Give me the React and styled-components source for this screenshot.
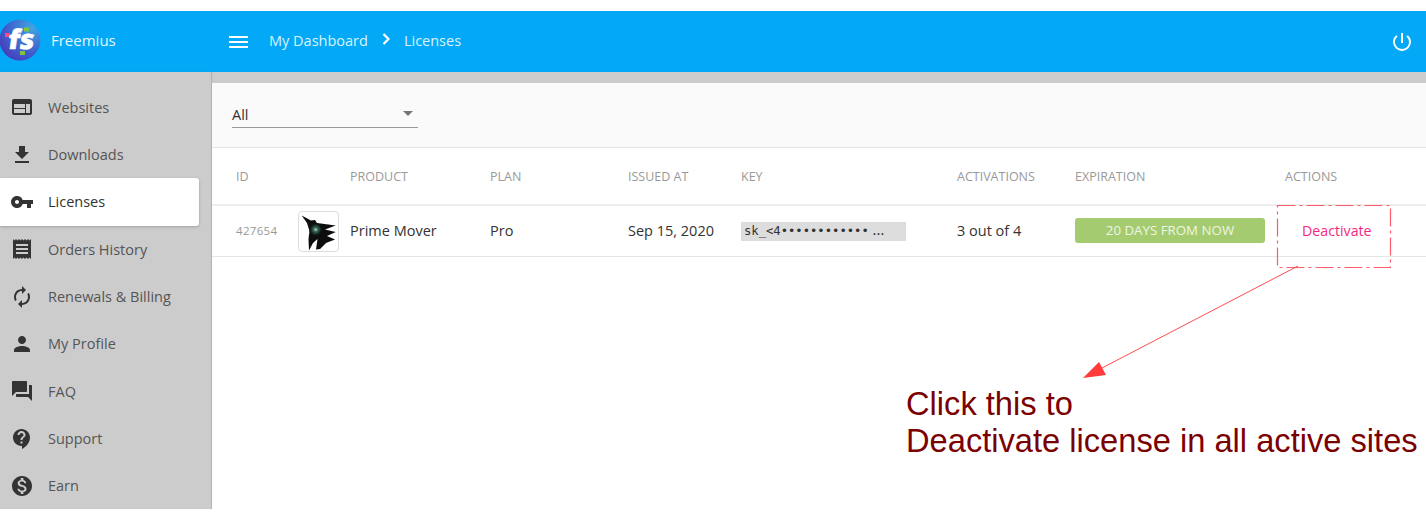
import React from 'react';
import styled, { createGlobalStyle } from 'styled-components';
import {
  MdWeb, MdFileDownload, MdVpnKey, MdReceipt, MdAutorenew, MdPerson,
  MdQuestionAnswer, MdContactSupport, MdMonetizationOn,
  MdPowerSettingsNew, MdArrowDropDown,
} from 'react-icons/md';

const Global = createGlobalStyle`
  html, body { margin: 0; padding: 0; background: #fff; overflow: hidden; }
  body { font-family: "Open Sans", "Liberation Sans", sans-serif; }
  * { box-sizing: border-box; }
`;

const Page = styled.div`
  position: relative;
  width: 1426px;
  height: 513px;
  padding-top: 11px;
  background: #fff;
  overflow: hidden;
`;

const Header = styled.header`
  height: 61px;
  background: #03a9f6;
  color: #e3f6fe;
  display: flex;
  align-items: center;
  font-size: 14.5px;
  padding-right: 12px;
`;

const Brand = styled.div`
  width: 229px;
  display: flex;
  align-items: center;
  gap: 10px;
  flex-shrink: 0;
  padding-bottom: 3px;
`;

const BrandName = styled.span`
  color: #e3f6fe;
  font-size: 15px;
`;

const Crumbs = styled.nav`
  display: flex;
  align-items: center;
  flex: 1;
  color: #d9f2fe;
  padding-bottom: 3px;
`;

const MenuBars = styled.svg`
  width: 19px;
  height: 12px;
  margin: 3px 21px 0 0;
  display: block;
`;

const Chevron = styled.svg`
  width: 9px;
  height: 12px;
  margin: -2px 13px 0 14px;
  display: block;
`;

const Power = styled(MdPowerSettingsNew)`
  width: 24px;
  height: 24px;
  color: #fff;
`;

const Body = styled.div`
  display: flex;
  height: 437px;
  background: #cccccc;
`;

const Sidebar = styled.aside`
  width: 211px;
  flex-shrink: 0;
  padding-top: 11.5px;
  box-shadow: 1px 0 1px rgba(0, 0, 0, 0.12);
`;

const NavItem = styled.div`
  width: 199px;
  height: 47.35px;
  display: flex;
  align-items: center;
  font-size: 14.5px;
  color: ${p => (p.$active ? '#333' : '#555')};
  background: ${p => (p.$active ? '#fff' : 'transparent')};
  border-radius: 0 3px 3px 0;
  box-shadow: ${p => (p.$active ? '0 1px 3px rgba(0,0,0,.22)' : 'none')};
`;

const NavIcon = styled.span`
  width: 48px;
  display: flex;
  justify-content: center;
  padding-right: 4px;
  color: #333;
  flex-shrink: 0;
  svg { width: 24px; height: 24px; display: block; }
`;

const Main = styled.main`
  flex: 1;
  margin: 11px 0 0 1px;
  background: #fff;
  border-radius: 3px 0 0 0;
  min-width: 0;
`;

const FilterBar = styled.div`
  height: 65px;
  padding: 19px 0 0 20px;
  background: #fafafa;
  border-bottom: 1px solid #e4e4e4;
`;

const Select = styled.div`
  width: 186px;
  height: 26px;
  display: flex;
  align-items: center;
  justify-content: space-between;
  font-size: 14.5px;
  color: #333;
  border-bottom: 1px solid #999;
`;

const Caret = styled(MdArrowDropDown)`
  width: 24px;
  height: 24px;
  color: #757575;
  margin: -4px -2px 0 0;
`;

const columns = '62px 52px 140px 138px 113px 216px 118px 210px 1fr';

const Row = styled.div`
  display: grid;
  grid-template-columns: ${columns};
  align-items: center;
  padding-left: 24px;
`;

const HeadRow = styled(Row)`
  height: 58px;
  font-size: 12.5px;
  color: #999;
  border-bottom: 2px solid #eee;
`;

const DataRow = styled(Row)`
  height: 51px;
  font-size: 14.5px;
  color: #333;
  border-bottom: 1px solid #e6e6e6;
`;

const TextCell = styled.span`
  padding-bottom: 2px;
`;

const IdCell = styled(TextCell)`
  font-size: 11.5px;
  color: #999;
  letter-spacing: 0.3px;
`;

const Thumb = styled.div`
  width: 41px;
  height: 41px;
  border: 1px solid #ddd;
  border-radius: 4px;
  background: #fff;
  svg { display: block; width: 39px; height: 39px; }
`;

const KeyBox = styled.div`
  width: 165px;
  height: 19px;
  background: #dddddd;
  padding-left: 3px;
  font-family: "DejaVu Sans Mono", "Liberation Mono", monospace;
  font-size: 12.2px;
  line-height: 19px;
  color: #333;
  white-space: nowrap;
  overflow: hidden;
`;

const KeyDots = styled.span`
  letter-spacing: -3.4px;
  margin-left: 2px;
`;

const Badge = styled.div`
  width: 190px;
  height: 25px;
  margin-top: -2px;
  border-radius: 3px;
  background: #a5cb70;
  color: #eef6e2;
  font-size: 13.3px;
  line-height: 25px;
  text-align: center;
  text-transform: uppercase;
`;

const DeactivateLink = styled.a`
  color: #f0297e;
  font-size: 14.2px;
  padding: 0 0 2px 17px;
`;

const Overlay = styled.svg`
  position: absolute;
  left: 0;
  top: 0;
  width: 1426px;
  height: 513px;
  pointer-events: none;
`;

const Note = styled.div`
  position: absolute;
  left: 906px;
  top: 385px;
  font-family: "Liberation Sans", Arial, sans-serif;
  font-size: 32.65px;
  line-height: 37px;
  color: #7b0000;
  white-space: nowrap;
`;

const BottomStrip = styled.div`
  height: 4px;
  background: #fff;
`;

const Logo = () => (
  <svg width="41" height="42" viewBox="0 0 41 42" aria-label="Freemius logo">
    <defs>
      <radialGradient id="lg" cx="0.8" cy="0.2" r="1">
        <stop offset="0" stopColor="#3fa5e4" />
        <stop offset="0.55" stopColor="#3f66cf" />
        <stop offset="1" stopColor="#4a35b8" />
      </radialGradient>
    </defs>
    <circle cx="20" cy="21" r="20.5" fill="url(#lg)" />
    <rect x="5" y="14" width="5" height="4" fill="#ef4f86" />
    <rect x="24" y="8.5" width="5" height="4" fill="#82c341" />
    <rect x="20" y="32" width="5" height="4" fill="#82c341" />
    <text
      x="11.5"
      y="30"
      transform="skewX(-8)"
      fontFamily="'Open Sans', sans-serif"
      fontWeight="800"
      fontSize="27"
      fill="#fff"
      stroke="#fff"
      strokeWidth="0.5"
      textLength="26"
      lengthAdjust="spacingAndGlyphs"
    >
      fs
    </text>
  </svg>
);

const ProductArt = () => (
  <svg viewBox="0 0 39 39">
    <defs>
      <radialGradient id="pg" cx="0.5" cy="0.5" r="0.5">
        <stop offset="0" stopColor="#c4d4cc" />
        <stop offset="0.3" stopColor="#3c6e5a" />
        <stop offset="0.75" stopColor="#14241e" />
        <stop offset="1" stopColor="#0a0f0d" />
      </radialGradient>
      <filter id="soft"><feGaussianBlur stdDeviation="0.4" /></filter>
    </defs>
    <path
      filter="url(#soft)"
      d="M2.7 3.5 L12 8.5 L16 8 L18 11 L36.7 13.5 L26 17.5 L36.7 20 L28 24 L36 27.5 L27 31 L21 37 L17 37.6 L18.5 27 L14 31 L10 38.6 L9.5 27 L10.5 19 L8 11 Z"
      fill="#0b0b0b"
    />
    <circle cx="16.7" cy="17.6" r="6.5" fill="url(#pg)" />
  </svg>
);

const nav = [
  ['Websites', MdWeb],
  ['Downloads', MdFileDownload],
  ['Licenses', MdVpnKey, true],
  ['Orders History', MdReceipt],
  ['Renewals & Billing', MdAutorenew],
  ['My Profile', MdPerson],
  ['FAQ', MdQuestionAnswer],
  ['Support', MdContactSupport],
  ['Earn', MdMonetizationOn],
];

export default function App() {
  return (
    <Page>
      <Global />
      <Header>
        <Brand>
          <Logo />
          <BrandName>Freemius</BrandName>
        </Brand>
        <Crumbs>
          <MenuBars viewBox="0 0 19 12">
            <rect width="19" height="2" fill="#fff" />
            <rect y="5" width="19" height="2" fill="#fff" />
            <rect y="10" width="19" height="2" fill="#fff" />
          </MenuBars>
          <span>My Dashboard</span>
          <Chevron viewBox="0 0 9 12">
            <polyline points="1.5,1 6.5,6 1.5,11" fill="none" stroke="#fff" strokeWidth="2.2" />
          </Chevron>
          <span>Licenses</span>
        </Crumbs>
        <Power />
      </Header>
      <Body>
        <Sidebar>
          {nav.map(([label, Icon, active]) => (
            <NavItem key={label} $active={active}>
              <NavIcon><Icon /></NavIcon>
              {label}
            </NavItem>
          ))}
        </Sidebar>
        <Main>
          <FilterBar>
            <Select>
              All
              <Caret />
            </Select>
          </FilterBar>
          <HeadRow>
            <span>ID</span>
            <span />
            <span>PRODUCT</span>
            <span>PLAN</span>
            <span>ISSUED AT</span>
            <span>KEY</span>
            <span>ACTIVATIONS</span>
            <span>EXPIRATION</span>
            <span>ACTIONS</span>
          </HeadRow>
          <DataRow>
            <IdCell>427654</IdCell>
            <Thumb><ProductArt /></Thumb>
            <TextCell>Prime Mover</TextCell>
            <TextCell>Pro</TextCell>
            <TextCell>Sep 15, 2020</TextCell>
            <KeyBox>sk_&lt;4••••••••••••<KeyDots>...</KeyDots></KeyBox>
            <TextCell>3 out of 4</TextCell>
            <Badge>20 days from now</Badge>
            <DeactivateLink>Deactivate</DeactivateLink>
          </DataRow>
        </Main>
      </Body>
      <BottomStrip />
      <Overlay viewBox="0 0 1426 513">
        <rect x="1277.5" y="205.5" width="113" height="62" fill="none" stroke="#ff5a6a" strokeWidth="1.2" strokeDasharray="18 4 3 4" />
        <line x1="1298" y1="266" x2="1100" y2="369" stroke="#ff4d4d" strokeWidth="1" />
        <polygon points="1083,378 1099,362 1106,375" fill="#ff3b3b" />
      </Overlay>
      <Note>
        Click this to<br />
        Deactivate license in all active sites
      </Note>
    </Page>
  );
}
